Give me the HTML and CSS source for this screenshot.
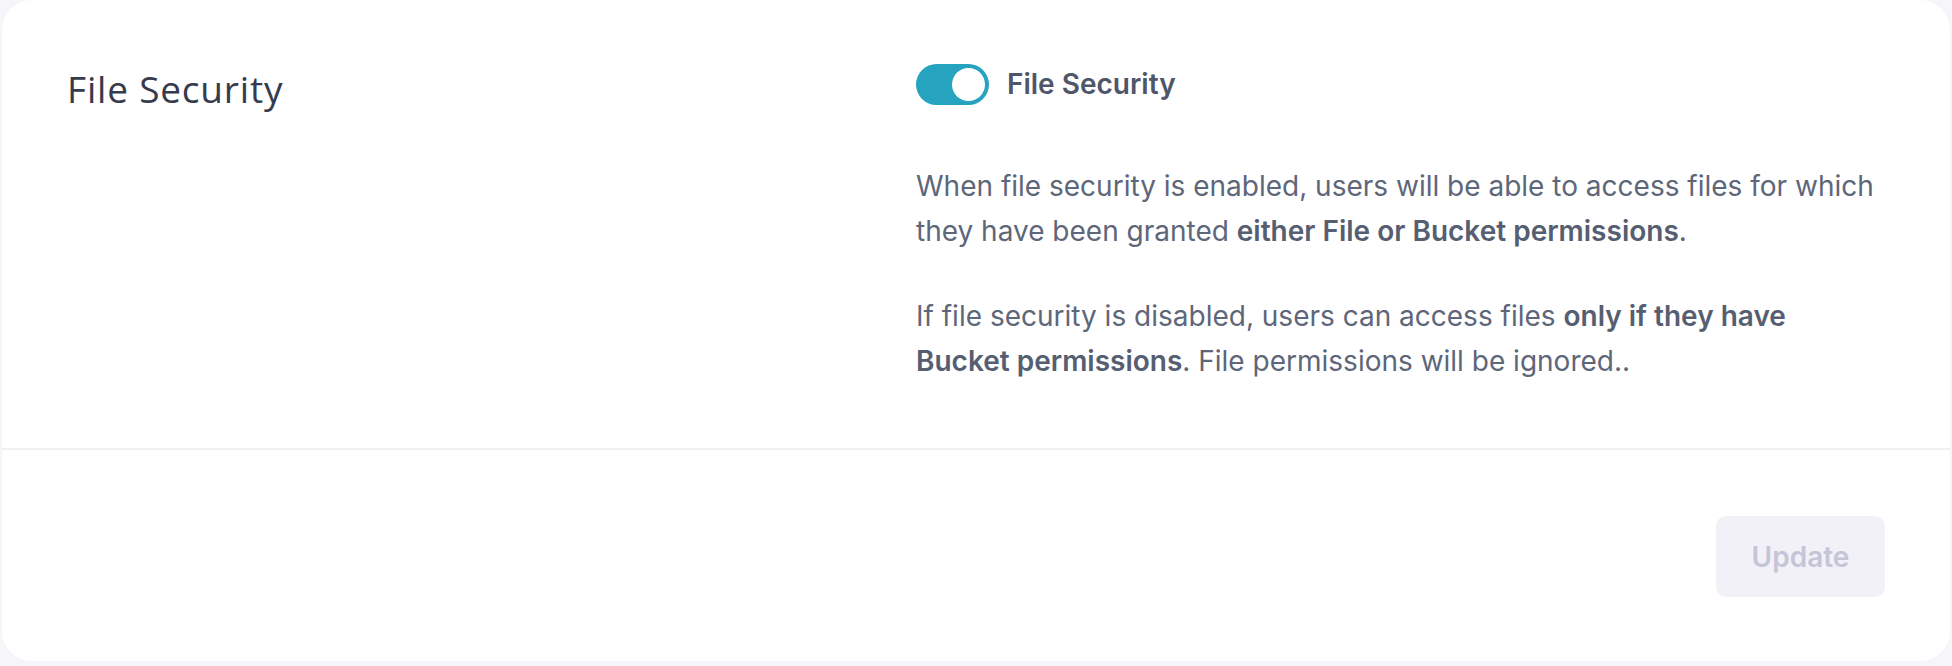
FILE: index.html
```html
<!DOCTYPE html>
<html lang="en">
<head>
<meta charset="utf-8">
<title>File Security</title>
<link rel="stylesheet" href="styles.css">
</head>
<body>
<div class="card">
  <div class="card-body">
    <h2 class="card-title">File Security</h2>
    <div class="card-content">
      <label class="toggle-row">
        <span class="switch" aria-checked="true" role="switch"><span class="knob"></span></span>
        <span class="toggle-label">File Security</span>
      </label>
      <p class="desc">When file security is enabled, users will be able to access files for which they have been granted <b>either File or Bucket permissions</b>.</p>
      <p class="desc">If file security is disabled, users can access files <b>only if they have Bucket permissions</b>. File permissions will be ignored..</p>
    </div>
  </div>
  <div class="card-footer">
    <button class="btn" disabled>Update</button>
  </div>
</div>
</body>
</html>
```

FILE: styles.css
```css
html, body {
  margin: 0;
  padding: 0;
  background: #f6f6fa;
}
body {
  font-family: "Inter", "Liberation Sans", sans-serif;
  padding: 0 2px;
}
.card {
  background: #ffffff;
  border-radius: 30px;
  height: 661px;
  box-sizing: border-box;
  display: flex;
  flex-direction: column;
}
.card-body {
  display: grid;
  grid-template-columns: 849px 969px;
  padding: 64px 65px 64px 65px;
  border-bottom: 2px solid #f0f0f4;
}
.card-title {
  margin: 0;
  font-family: "Open Sans", "Liberation Sans", sans-serif;
  font-weight: 500;
  font-size: 37px;
  line-height: 48px;
  letter-spacing: 0.8px;
  color: #363a4d;
  padding-top: 1px;
}
.card-content {
  display: flex;
  flex-direction: column;
}
.toggle-row {
  display: flex;
  align-items: center;
  gap: 18px;
  height: 41px;
}
.switch {
  width: 73px;
  height: 41px;
  box-sizing: border-box;
  border-radius: 21px;
  background: #25a3bf;
  display: flex;
  align-items: center;
  justify-content: flex-end;
  padding-right: 4px;
  flex: none;
}
.knob {
  width: 33px;
  height: 33px;
  border-radius: 50%;
  background: #ffffff;
}
.toggle-label {
  font-size: 28px;
  font-weight: 600;
  color: #4f566a;
  line-height: 41px;
}
.desc {
  margin: 0;
  font-size: 28px;
  line-height: 45px;
  color: #5e6679;
}
.desc:first-of-type {
  margin-top: 59px;
}
.desc + .desc {
  margin-top: 40px;
}
.desc b {
  font-weight: 600;
  color: #565e71;
}
.card-footer {
  flex: 1;
  display: flex;
  justify-content: flex-end;
  align-items: center;
  padding: 0 65px;
}
.btn {
  font-family: "Inter", "Liberation Sans", sans-serif;
  font-size: 28px;
  font-weight: 600;
  color: #c4c5d7;
  background: #f1f1f7;
  border: none;
  border-radius: 10px;
  width: 169px;
  height: 81px;
  padding: 0;
  margin-top: 2px;
}
```
